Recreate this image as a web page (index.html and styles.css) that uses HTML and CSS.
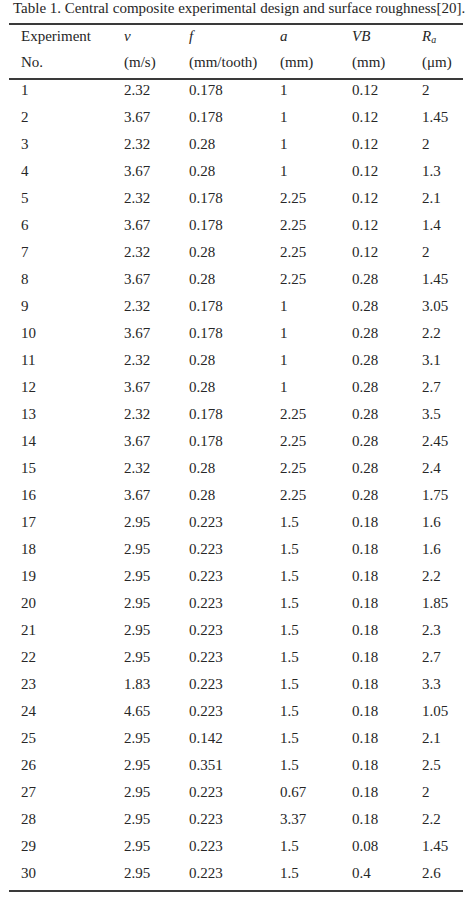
FILE: index.html
```html
<!DOCTYPE html>
<html lang="en">
<head>
<meta charset="utf-8">
<title>Table 1</title>
<link rel="stylesheet" href="styles.css">
</head>
<body>
<div class="page">
  <p class="caption">Table 1. Central composite experimental design and surface roughness[20].</p>
  <table class="data">
    <colgroup>
      <col class="c1"><col class="c2"><col class="c3"><col class="c4"><col class="c5"><col class="c6">
    </colgroup>
    <thead>
      <tr><th>Experiment</th><th><i>v</i></th><th><i>f</i></th><th><i>a</i></th><th><i>VB</i></th><th><i>R<sub>a</sub></i></th></tr>
      <tr class="units"><th>No.</th><th>(m/s)</th><th>(mm/tooth)</th><th>(mm)</th><th>(mm)</th><th>(μm)</th></tr>
    </thead>
    <tbody>
      <tr><td>1</td><td>2.32</td><td>0.178</td><td>1</td><td>0.12</td><td>2</td></tr>
      <tr><td>2</td><td>3.67</td><td>0.178</td><td>1</td><td>0.12</td><td>1.45</td></tr>
      <tr><td>3</td><td>2.32</td><td>0.28</td><td>1</td><td>0.12</td><td>2</td></tr>
      <tr><td>4</td><td>3.67</td><td>0.28</td><td>1</td><td>0.12</td><td>1.3</td></tr>
      <tr><td>5</td><td>2.32</td><td>0.178</td><td>2.25</td><td>0.12</td><td>2.1</td></tr>
      <tr><td>6</td><td>3.67</td><td>0.178</td><td>2.25</td><td>0.12</td><td>1.4</td></tr>
      <tr><td>7</td><td>2.32</td><td>0.28</td><td>2.25</td><td>0.12</td><td>2</td></tr>
      <tr><td>8</td><td>3.67</td><td>0.28</td><td>2.25</td><td>0.28</td><td>1.45</td></tr>
      <tr><td>9</td><td>2.32</td><td>0.178</td><td>1</td><td>0.28</td><td>3.05</td></tr>
      <tr><td>10</td><td>3.67</td><td>0.178</td><td>1</td><td>0.28</td><td>2.2</td></tr>
      <tr><td>11</td><td>2.32</td><td>0.28</td><td>1</td><td>0.28</td><td>3.1</td></tr>
      <tr><td>12</td><td>3.67</td><td>0.28</td><td>1</td><td>0.28</td><td>2.7</td></tr>
      <tr><td>13</td><td>2.32</td><td>0.178</td><td>2.25</td><td>0.28</td><td>3.5</td></tr>
      <tr><td>14</td><td>3.67</td><td>0.178</td><td>2.25</td><td>0.28</td><td>2.45</td></tr>
      <tr><td>15</td><td>2.32</td><td>0.28</td><td>2.25</td><td>0.28</td><td>2.4</td></tr>
      <tr><td>16</td><td>3.67</td><td>0.28</td><td>2.25</td><td>0.28</td><td>1.75</td></tr>
      <tr><td>17</td><td>2.95</td><td>0.223</td><td>1.5</td><td>0.18</td><td>1.6</td></tr>
      <tr><td>18</td><td>2.95</td><td>0.223</td><td>1.5</td><td>0.18</td><td>1.6</td></tr>
      <tr><td>19</td><td>2.95</td><td>0.223</td><td>1.5</td><td>0.18</td><td>2.2</td></tr>
      <tr><td>20</td><td>2.95</td><td>0.223</td><td>1.5</td><td>0.18</td><td>1.85</td></tr>
      <tr><td>21</td><td>2.95</td><td>0.223</td><td>1.5</td><td>0.18</td><td>2.3</td></tr>
      <tr><td>22</td><td>2.95</td><td>0.223</td><td>1.5</td><td>0.18</td><td>2.7</td></tr>
      <tr><td>23</td><td>1.83</td><td>0.223</td><td>1.5</td><td>0.18</td><td>3.3</td></tr>
      <tr><td>24</td><td>4.65</td><td>0.223</td><td>1.5</td><td>0.18</td><td>1.05</td></tr>
      <tr><td>25</td><td>2.95</td><td>0.142</td><td>1.5</td><td>0.18</td><td>2.1</td></tr>
      <tr><td>26</td><td>2.95</td><td>0.351</td><td>1.5</td><td>0.18</td><td>2.5</td></tr>
      <tr><td>27</td><td>2.95</td><td>0.223</td><td>0.67</td><td>0.18</td><td>2</td></tr>
      <tr><td>28</td><td>2.95</td><td>0.223</td><td>3.37</td><td>0.18</td><td>2.2</td></tr>
      <tr><td>29</td><td>2.95</td><td>0.223</td><td>1.5</td><td>0.08</td><td>1.45</td></tr>
      <tr><td>30</td><td>2.95</td><td>0.223</td><td>1.5</td><td>0.4</td><td>2.6</td></tr>
    </tbody>
  </table>
</div>
</body>
</html>
```

FILE: styles.css
```css
html, body {
  margin: 0;
  padding: 0;
  background: #ffffff;
}

body {
  font-family: "Liberation Serif", "Times New Roman", serif;
  font-size: 15px;
  color: #262626;
}

.page {
  width: 474px;
  overflow: hidden;
}

.caption {
  margin: 0 0 6px 13px;
  line-height: 17px;
  white-space: nowrap;
}

.data {
  border-collapse: collapse;
  table-layout: fixed;
  width: 454px;
  margin-left: 9px;
  border-top: 2px solid #3a3a3a;
  border-bottom: 2px solid #3a3a3a;
  font-family: "Liberation Serif", "Times New Roman", serif;
  font-size: 15px;
}

.c1 { width: 115px; }
.c2 { width: 65px; }
.c3 { width: 91px; }
.c4 { width: 72px; }
.c5 { width: 70px; }
.c6 { width: 41px; }

.data th,
.data td {
  font-family: "Liberation Serif", "Times New Roman", serif;
  text-align: left;
  font-weight: normal;
  line-height: 17px;
  padding: 0;
  white-space: nowrap;
}

.data th {
  padding-top: 2.5px;
  padding-bottom: 7px;
}

.data td {
  padding-top: 2px;
  padding-bottom: 8px;
}

.data th:first-child,
.data td:first-child {
  padding-left: 12px;
}

.data thead tr.units th {
  border-bottom: 2px solid #3a3a3a;
}

.data sub {
  font-size: 10px;
  line-height: 0;
  vertical-align: -2px;
}
```
